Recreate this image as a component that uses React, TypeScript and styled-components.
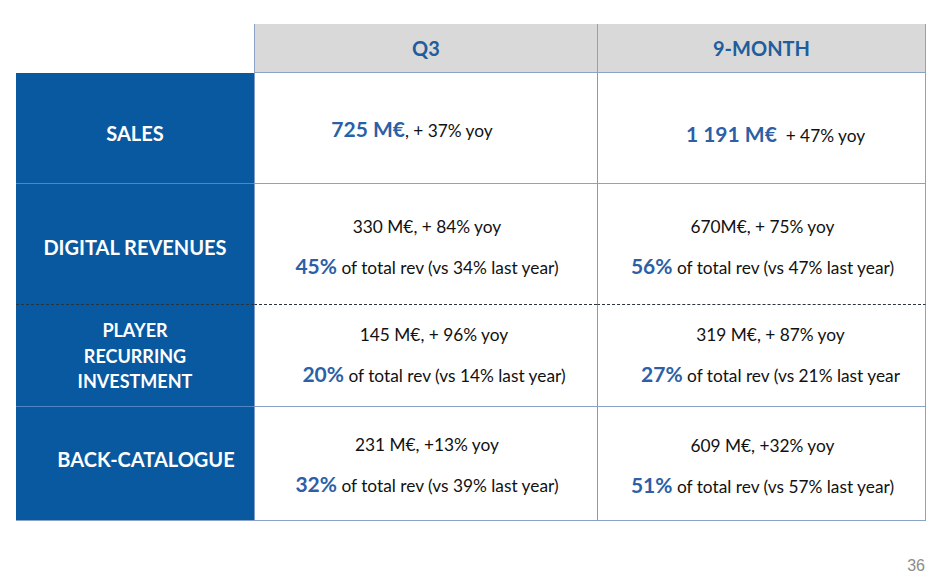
import styled, { createGlobalStyle } from "styled-components";

const GlobalStyle = createGlobalStyle`
  html, body {
    margin: 0;
    padding: 0;
    background: #ffffff;
  }
  body {
    font-family: Lato, "Open Sans", "Liberation Sans", sans-serif;
  }
`;

const Slide = styled.div`
  position: relative;
  width: 943px;
  height: 578px;
  background: #ffffff;
  padding: 24px 0 0 16px;
  box-sizing: border-box;
`;

const Table = styled.div`
  display: grid;
  grid-template-columns: 238px 343px 329px;
  grid-template-rows: 49px 111px 121px 102px 114px;
`;

const Corner = styled.div`
  background: #ffffff;
`;

// shift content by d px using asymmetric padding
const shift = (dx?: number, dy?: number) => `
  padding-left: ${dx && dx > 0 ? dx * 2 : 0}px;
  padding-right: ${dx && dx < 0 ? -dx * 2 : 0}px;
  padding-top: ${dy && dy > 0 ? dy * 2 : 0}px;
  padding-bottom: ${dy && dy < 0 ? -dy * 2 : 0}px;
`;

const HeadCell = styled.div<{ $last?: boolean }>`
  display: flex;
  align-items: center;
  justify-content: center;
  background: #d9d9d9;
  border-left: 1px solid #8aa2c8;
  border-right: ${(p) => (p.$last ? "1px solid #8aa2c8" : "none")};
  border-bottom: 1px solid #8aa2c8;
  color: #1f5d9c;
  font-weight: 700;
  font-size: 20px;
`;

const RowLabel = styled.div<{ $dashed?: boolean; $last?: boolean; $dx?: number; $dy?: number; $small?: boolean }>`
  display: flex;
  flex-direction: column;
  align-items: center;
  justify-content: center;
  background: #0859a0;
  color: #ffffff;
  font-weight: 700;
  font-size: ${(p) => (p.$small ? "18px" : "20px")};
  line-height: ${(p) => (p.$small ? "25.5px" : "24px")};
  text-align: center;
  ${(p) => shift(p.$dx, p.$dy)}
  border-bottom: ${(p) =>
    p.$dashed ? "1px dashed #2a3340" : p.$last ? "1px solid #8aa2c8" : "1px solid #4f86c4"};
  box-sizing: border-box;
`;

const DataCell = styled.div<{ $dashed?: boolean; $last?: boolean; $dx?: number; $dy?: number }>`
  display: flex;
  flex-direction: column;
  align-items: center;
  justify-content: center;
  gap: 17px;
  border-left: 1px solid #7d9ccb;
  border-right: ${(p) => (p.$last ? "1px solid #8aa2c8" : "none")};
  border-bottom: ${(p) => (p.$dashed ? "1px dashed #2a3340" : "1px solid #8aa2c8")};
  color: #111111;
  font-size: 17.3px;
  ${(p) => shift(p.$dx, p.$dy)}
  box-sizing: border-box;
`;

const Line = styled.div`
  white-space: nowrap;
  line-height: 22px;
`;

const Big = styled.span`
  color: #2c5fa6;
  font-weight: 700;
  font-size: 21px;
`;

const PageNumber = styled.div`
  position: absolute;
  right: 18px;
  bottom: 3px;
  color: #8c8c8c;
  font-family: "Liberation Sans", Arial, sans-serif;
  font-size: 16px;
`;

const rows = [
  {
    label: ["DIGITAL REVENUES"],
    q3: ["330 M€, + 84% yoy", "45%", " of total rev (vs 34% last year)"],
    nine: ["670M€, + 75% yoy", "56%", " of total rev (vs 47% last year)"],
    dashed: true,
    labelDy: 3,
    q3dx: 1,
    ninedx: 1,
    dy: 3,
  },
  {
    label: ["PLAYER", "RECURRING", "INVESTMENT"],
    q3: ["145 M€, + 96% yoy", "20%", " of total rev (vs 14% last year)"],
    nine: ["319 M€, + 87% yoy", "27%", " of total rev (vs 21% last year"],
    small: true,
    labelDy: 1,
    q3dx: 8,
    ninedx: 9,
    dy: 0,
  },
  {
    label: ["BACK-CATALOGUE"],
    q3: ["231 M€, +13% yoy", "32%", " of total rev (vs 39% last year)"],
    nine: ["609 M€, +32% yoy", "51%", " of total rev (vs 57% last year)"],
    last: true,
    labelDx: 11,
    labelDy: -5,
    q3dx: 1,
    ninedx: 1,
    dy: 2,
  },
];

export default function App() {
  return (
    <>
      <GlobalStyle />
      <Slide>
        <Table>
          <Corner />
          <HeadCell>Q3</HeadCell>
          <HeadCell $last>9-MONTH</HeadCell>

          <RowLabel $dy={5}>SALES</RowLabel>
          <DataCell $dx={-14} $dy={2}>
            <Line>
              <Big>725 M€</Big>, + 37% yoy
            </Line>
          </DataCell>
          <DataCell $last $dx={14} $dy={7}>
            <Line>
              <Big>1 191 M€</Big>&nbsp;&nbsp;+ 47% yoy
            </Line>
          </DataCell>

          {rows.map((r, i) => (
            <>
              <RowLabel
                key={r.label[0]}
                $dashed={r.dashed}
                $last={r.last}
                $dx={r.labelDx}
                $dy={r.labelDy}
                $small={r.small}
              >
                {r.label.map((l) => (
                  <div key={l}>{l}</div>
                ))}
              </RowLabel>
              <DataCell key={`q3-${i}`} $dashed={r.dashed} $dx={r.q3dx} $dy={r.dy}>
                <Line>{r.q3[0]}</Line>
                <Line>
                  <Big>{r.q3[1]}</Big>
                  {r.q3[2]}
                </Line>
              </DataCell>
              <DataCell key={`nine-${i}`} $dashed={r.dashed} $last $dx={r.ninedx} $dy={r.last ? r.dy + 1 : r.dy}>
                <Line>{r.nine[0]}</Line>
                <Line>
                  <Big>{r.nine[1]}</Big>
                  {r.nine[2]}
                </Line>
              </DataCell>
            </>
          ))}
        </Table>
        <PageNumber>36</PageNumber>
      </Slide>
    </>
  );
}
